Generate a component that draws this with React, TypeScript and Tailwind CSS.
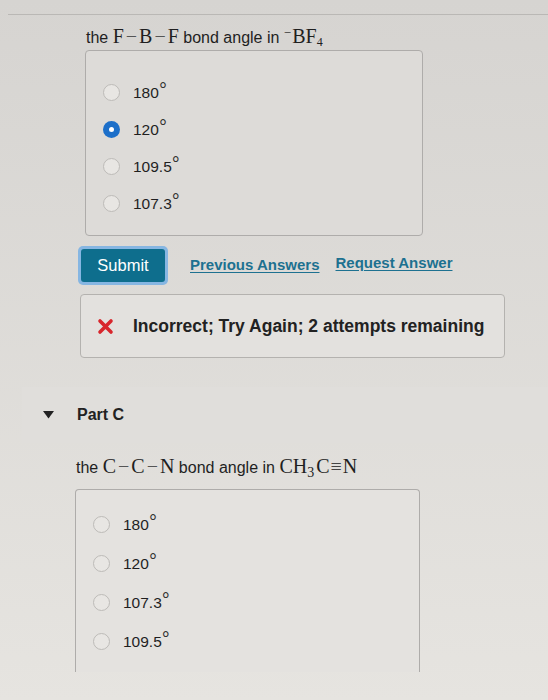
import React from "react";

const Radio = ({ checked }: { checked?: boolean }) =>
  checked ? (
    <span className="flex h-[17px] w-[17px] shrink-0 items-center justify-center rounded-full bg-[#1c6fc9]">
      <span className="h-[5px] w-[5px] rounded-full bg-white" />
    </span>
  ) : (
    <span className="h-[17px] w-[17px] shrink-0 rounded-full border border-[#bdbbb8] bg-[#e8e6e3]" />
  );

const Option = ({ label, checked, h }: { label: string; checked?: boolean; h: string }) => (
  <div className={`flex items-center gap-[13px] pl-[17px] ${h}`}>
    <Radio checked={checked} />
    <span className="text-[15.5px] text-[#1f1f1f]">
      {label}
      <span className="relative -top-[1px] text-[20px] font-light leading-none text-[#333]">°</span>
    </span>
  </div>
);

const Serif = ({ children }: { children: React.ReactNode }) => (
  <span className="font-['Liberation_Serif',serif] text-[20px]">{children}</span>
);

const Minus = () => <span className="mx-[2px] text-[#555]">−</span>;

export default function App() {
  return (
    <div className="h-[700px] w-[548px] overflow-hidden bg-linear-to-b from-[#d6d4d1] to-[#e6e4e0] font-['Liberation_Sans',Arial,sans-serif] text-[#1f1f1f]">
      <div className="ml-[8px] mt-[14px] border-t border-[#bab8b5]" />
      <div className="ml-[86px] mt-[11px] h-[20px] text-[16px] leading-[20px]">
        the{" "}
        <Serif>
          F<Minus />B<Minus />F
        </Serif>{" "}
        bond angle in{" "}
        <Serif>
          <sup className="mr-[1px] text-[13px]">−</sup>BF<sub className="text-[12px]">4</sub>
        </Serif>
      </div>

      <div className="ml-[85px] mt-[4px] w-[338px] rounded-[4px] border border-[#aeacaa] bg-[#dddbd8] pb-[13px] pt-[23px]">
        <Option label="180" h="h-[37px]" />
        <Option label="120" checked h="h-[37px]" />
        <Option label="109.5" h="h-[37px]" />
        <Option label="107.3" h="h-[37px]" />
      </div>

      <div className="ml-[78px] mt-[10px] flex items-center">
        <div className="rounded-[5px] bg-[#86b6e2] p-[3px]">
          <div className="flex h-[33px] w-[84px] items-center justify-center rounded-[3px] bg-[#0e6e8d] text-[16.5px] text-white">
            Submit
          </div>
        </div>
        <a className="ml-[22px] text-[15px] font-bold text-[#1d7190] underline underline-offset-2">
          Previous Answers
        </a>
        <a className="ml-[16px] -mt-[4px] text-[15px] font-bold text-[#1d7190] underline underline-offset-2">
          Request Answer
        </a>
      </div>

      <div className="ml-[80px] mt-[9px] flex h-[64px] w-[425px] items-center rounded-[4px] border border-[#b4b2af] bg-[#e3e1de] pl-[16px]">
        <svg width="17" height="17" viewBox="0 0 17 17">
          <path d="M3 3 L14 14 M14 3 L3 14" stroke="#d8262c" strokeWidth="3.6" strokeLinecap="round" />
        </svg>
        <span className="ml-[19px] text-[17.5px] font-bold text-[#222]">
          Incorrect; Try Again; 2 attempts remaining
        </span>
      </div>

      <div className="ml-[22px] mt-[29px] flex h-[56px] items-center bg-[#e0dedb] pl-[21px]">
        <svg width="11" height="8" viewBox="0 0 11 8">
          <polygon points="0,0 11,0 5.5,7.5" fill="#222" />
        </svg>
        <span className="ml-[23px] text-[16px] font-bold text-[#222]">Part C</span>
      </div>

      <div className="ml-[76px] mt-[13px] h-[20px] text-[16px] leading-[20px]">
        the{" "}
        <Serif>
          C<Minus />C<Minus />N
        </Serif>{" "}
        bond angle in{" "}
        <Serif>
          CH<sub className="text-[14px]">3</sub>
          <span className="ml-[2px]">C</span>
          <span className="mx-[1px] text-[#444]">≡</span>N
        </Serif>
      </div>

      <div className="ml-[75px] mt-[13px] h-[183px] w-[345px] rounded-t-[4px] border-x border-t border-[#aeacaa] bg-[#e4e2df] pt-[15px]">
        <Option label="180" h="h-[39px]" />
        <Option label="120" h="h-[39px]" />
        <Option label="107.3" h="h-[39px]" />
        <Option label="109.5" h="h-[39px]" />
      </div>
    </div>
  );
}
